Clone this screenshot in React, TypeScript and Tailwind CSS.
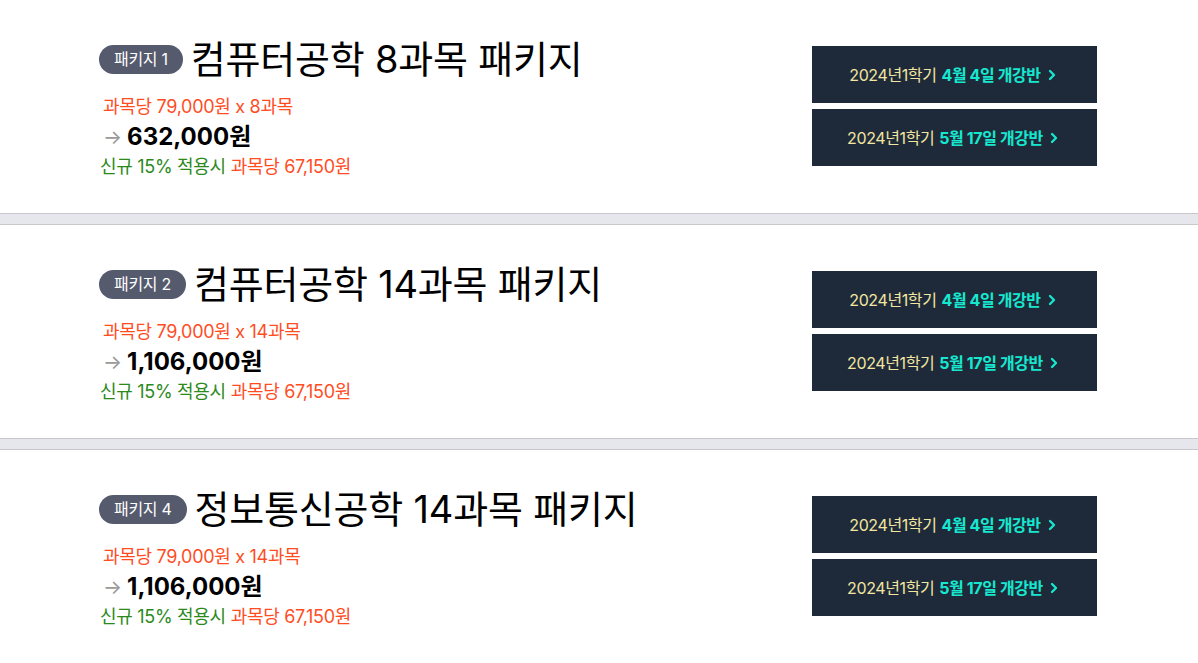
import { ChevronRight } from "lucide-react";

type Pkg = {
  no: number;
  title: string;
  count: number;
  total: string;
};

const packages: Pkg[] = [
  { no: 1, title: "컴퓨터공학 8과목 패키지", count: 8, total: "632,000원" },
  { no: 2, title: "컴퓨터공학 14과목 패키지", count: 14, total: "1,106,000원" },
  { no: 4, title: "정보통신공학 14과목 패키지", count: 14, total: "1,106,000원" },
];

const classes = [
  { date: "4월 4일 개강반" },
  { date: "5월 17일 개강반" },
];

function PackageRow({ pkg }: { pkg: Pkg }) {
  return (
    <section className="flex h-[213px] items-start justify-between bg-white pl-[99px] pr-[101px]">
      <div className="pt-[39px]">
        <div className="flex h-[40px] items-center gap-2">
          <span className="flex h-[29px] items-center rounded-full bg-[#555a6d] px-[15px] text-[16px] tracking-[-0.3px] text-white">
            패키지 {pkg.no}
          </span>
          <h2 className="text-[38px] leading-[40px] tracking-[-0.2px] text-black">{pkg.title}</h2>
        </div>
        <div className="mt-[13px]">
          <p className="pl-[4px] text-[18px] leading-[30px] tracking-[-0.3px] text-[#ff4d1f]">
            과목당 79,000원 x {pkg.count}과목
          </p>
          <p className="flex items-center pl-[4px] leading-[30px]">
            <span className="mr-[5px] text-[20px] text-[#9a9a9a]">→</span>
            <span className="text-[24px] font-bold text-black">{pkg.total}</span>
          </p>
          <p className="pl-[1px] text-[18px] leading-[30px] tracking-[-0.3px]">
            <span className="text-[#2c8a1d]">신규 15% 적용시</span>{" "}
            <span className="text-[#ff4d1f]">과목당 67,150원</span>
          </p>
        </div>
      </div>

      <div className="flex flex-col gap-[6px] pt-[46px]">
        {classes.map((c) => (
          <button
            key={c.date}
            className="flex h-[57px] w-[285px] items-center justify-center bg-[#1e2a3a] text-[16px] tracking-[-0.4px]"
          >
            <span className="text-[#f3e6a0]">2024년1학기</span>
            <span className="ml-[5px] font-bold text-[#16e8d0]">{c.date}</span>
            <ChevronRight className="ml-[3px] h-[16px] w-[16px] text-[#16e8d0]" strokeWidth={3.5} />
          </button>
        ))}
      </div>
    </section>
  );
}

export default function App() {
  return (
    <div
      className="min-h-screen bg-white"
      style={{ fontFamily: "Inter, 'Noto Sans CJK KR', sans-serif" }}
    >
      {packages.map((pkg, i) => (
        <div key={pkg.no}>
          {i > 0 && <div className="h-[12px] border-y border-[#c8c8cc] bg-[#e6e7ec]" />}
          <PackageRow pkg={pkg} />
        </div>
      ))}
    </div>
  );
}
